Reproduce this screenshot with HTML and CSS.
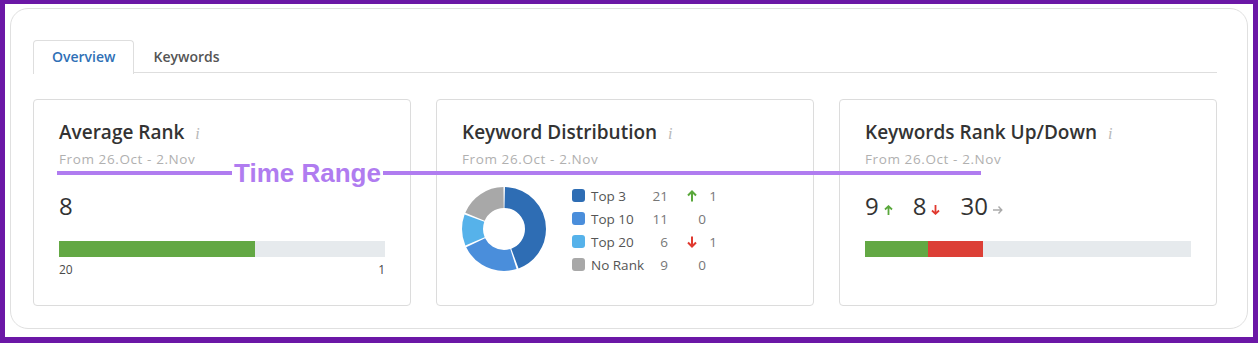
FILE: index.html
```html
<!DOCTYPE html>
<html lang="en">
<head>
<meta charset="utf-8">
<title>Position Tracking Overview</title>
<link rel="stylesheet" href="styles.css">
</head>
<body>
<div class="frame">
  <div class="panel">
    <div class="tabs">
      <div class="tab active">Overview</div>
      <div class="tab">Keywords</div>
    </div>
    <div class="cards">
      <section class="card">
        <h2 class="card-title">Average Rank <i class="info">i</i></h2>
        <div class="range">From 26.Oct - 2.Nov</div>
        <div class="big">8</div>
        <div class="bar"><div class="seg green" style="width:60%"></div></div>
        <div class="scale"><span class="num">20</span><span class="num">1</span></div>
      </section>

      <section class="card">
        <h2 class="card-title">Keyword Distribution <i class="info">i</i></h2>
        <div class="range">From 26.Oct - 2.Nov</div>
        <div class="dist">
          <svg class="donut" width="84" height="84" viewBox="0 0 84 84">
            <g transform="rotate(-90 42 42)" fill="none" stroke-width="21">
              <circle cx="42" cy="42" r="31.5" stroke="#2e6db4" stroke-dasharray="86.9 197.92" stroke-dashoffset="-0.75"/>
              <circle cx="42" cy="42" r="31.5" stroke="#4a8edb" stroke-dasharray="44.8 197.92" stroke-dashoffset="-89.18"/>
              <circle cx="42" cy="42" r="31.5" stroke="#56b2ea" stroke-dasharray="23.8 197.92" stroke-dashoffset="-135.5"/>
              <circle cx="42" cy="42" r="31.5" stroke="#a8a8a8" stroke-dasharray="36.4 197.92" stroke-dashoffset="-160.77"/>
            </g>
          </svg>
          <div class="legend">
            <div class="row">
              <span class="sw top3"></span><span class="lbl">Top 3</span><span class="cnt">21</span>
              <span class="chg"><svg class="arr" width="10" height="12" viewBox="0 0 10 12"><path d="M5 11.5V1.5M1 5.5L5 1.5L9 5.5" fill="none" stroke="#5aa83c" stroke-width="2"/></svg><span>1</span></span>
            </div>
            <div class="row">
              <span class="sw top10"></span><span class="lbl">Top 10</span><span class="cnt">11</span>
              <span class="chg"><span>0</span></span>
            </div>
            <div class="row">
              <span class="sw top20"></span><span class="lbl">Top 20</span><span class="cnt">6</span>
              <span class="chg"><svg class="arr" width="10" height="12" viewBox="0 0 10 12"><path d="M5 0.5V10.5M1 6.5L5 10.5L9 6.5" fill="none" stroke="#e0392f" stroke-width="2"/></svg><span>1</span></span>
            </div>
            <div class="row">
              <span class="sw norank"></span><span class="lbl">No Rank</span><span class="cnt">9</span>
              <span class="chg"><span>0</span></span>
            </div>
          </div>
        </div>
      </section>

      <section class="card">
        <h2 class="card-title">Keywords Rank Up/Down <i class="info">i</i></h2>
        <div class="range">From 26.Oct - 2.Nov</div>
        <div class="big moves">
          <span class="mv">9<svg class="marr" width="9" height="10" viewBox="0 0 9 10"><path d="M4.5 10V1.2M1 4.5L4.5 1.2L8 4.5" fill="none" stroke="#5aa83c" stroke-width="1.8"/></svg></span>
          <span class="mv">8<svg class="marr" width="9" height="10" viewBox="0 0 9 10"><path d="M4.5 0V8.8M1 5.5L4.5 8.8L8 5.5" fill="none" stroke="#e0392f" stroke-width="1.8"/></svg></span>
          <span class="mv">30<svg class="marr" width="10" height="10" viewBox="0 0 10 10"><path d="M0 5H8.8M5.5 1.5L8.8 5L5.5 8.5" fill="none" stroke="#aaaaaa" stroke-width="1.4"/></svg></span>
        </div>
        <div class="bar">
          <div class="seg green" style="width:19.4%"></div>
          <div class="seg red" style="width:16.9%"></div>
        </div>
      </section>
    </div>
  </div>

  <div class="annotation">
    <span class="anno-line left"></span>
    <span class="anno-text">Time Range</span>
    <span class="anno-line right"></span>
  </div>
</div>
</body>
</html>
```

FILE: styles.css
```css
* { box-sizing: border-box; }

html, body {
  margin: 0;
  padding: 0;
  background: #ffffff;
}

body {
  font-family: "Open Sans", "Noto Sans", "Liberation Sans", sans-serif;
  color: #333333;
}

.frame {
  position: relative;
  width: 1258px;
  height: 343px;
  border-style: solid;
  border-color: #6b17a6;
  border-width: 4px 5px 6px 5px;
  background: #ffffff;
  padding: 4px 5px 0 5px;
}

.panel {
  width: 1238px;
  height: 321px;
  border: 1px solid #e0e0e0;
  border-radius: 18px;
  padding: 31px 30px 0 22px;
}

.tabs {
  display: flex;
  border-bottom: 1px solid #dedede;
  height: 33px;
}

.tab {
  height: 33px;
  padding: 0 18px;
  font-size: 14px;
  font-weight: 600;
  line-height: 31px;
  color: #555555;
  border: 1px solid transparent;
  border-bottom: none;
}

.tab.active {
  color: #2f70b6;
  border-color: #dedede;
  border-radius: 4px 4px 0 0;
  background: #ffffff;
  height: 34px;
}

.cards {
  display: grid;
  grid-template-columns: repeat(3, 1fr);
  gap: 25px;
  margin-top: 26px;
}

.card {
  height: 207px;
  border: 1px solid #dcdcdc;
  border-radius: 4px;
  padding: 20px 25px 0 25px;
}

.card-title {
  margin: 0;
  font-size: 19px;
  font-weight: 600;
  line-height: 24px;
  color: #333333;
  white-space: nowrap;
}

.info {
  font-family: "Liberation Serif", "DejaVu Serif", serif;
  font-style: italic;
  font-weight: 400;
  font-size: 16px;
  color: #b8b8b8;
  margin-left: 6px;
}

.range {
  margin-top: 5px;
  font-size: 13.5px;
  letter-spacing: 0.6px;
  line-height: 16px;
  color: #b0b0b0;
}

.big {
  margin-top: 24px;
  font-size: 24px;
  line-height: 30px;
  font-weight: 400;
  color: #333333;
}

.bar {
  display: flex;
  margin-top: 20px;
  height: 16px;
  background: #e6eaed;
}

.seg { height: 100%; }
.seg.green { background: #63a844; }
.seg.red { background: #dc3f36; }

.scale {
  display: flex;
  justify-content: space-between;
  margin-top: 5px;
  font-size: 12px;
  line-height: 16px;
}

.num { color: #4a4a4a; }

/* Keyword distribution */
.dist {
  display: flex;
  align-items: flex-start;
  margin-top: 17px;
}

.donut {
  display: block;
  margin-top: 3px;
  flex: none;
}

.legend {
  margin-left: 26px;
  font-size: 13.5px;
  color: #555555;
}

.row {
  display: flex;
  align-items: center;
  height: 23px;
}

.sw {
  width: 13px;
  height: 13px;
  border-radius: 3px;
  margin-right: 6px;
  flex: none;
}
.sw.top3 { background: #2e6db4; }
.sw.top10 { background: #4a8edb; }
.sw.top20 { background: #56b2ea; }
.sw.norank { background: #a8a8a8; }

.lbl { width: 58px; }

.cnt {
  width: 19px;
  text-align: right;
  color: #777777;
}

.chg {
  display: flex;
  align-items: center;
  justify-content: center;
  gap: 12px;
  width: 44px;
  margin-left: 12px;
  color: #777777;
}

.arr { display: block; }

/* Rank up/down */
.moves {
  display: flex;
  gap: 20px;
}

.mv {
  display: inline-flex;
  align-items: baseline;
  gap: 5px;
}

.marr {
  display: inline-block;
  vertical-align: baseline;
}

/* annotation overlay */
.annotation {
  position: absolute;
  left: 52px;
  top: 154px;
  display: flex;
  align-items: center;
  height: 30px;
}

.anno-line {
  display: block;
  height: 4px;
  background: #b07cf0;
}
.anno-line.left { width: 175px; }
.anno-line.right { width: 598px; }

.anno-text {
  padding: 0 2px;
  font-family: "Liberation Sans", Arial, sans-serif;
  font-weight: 700;
  font-size: 26px;
  line-height: 30px;
  color: #b07cf0;
}
```
